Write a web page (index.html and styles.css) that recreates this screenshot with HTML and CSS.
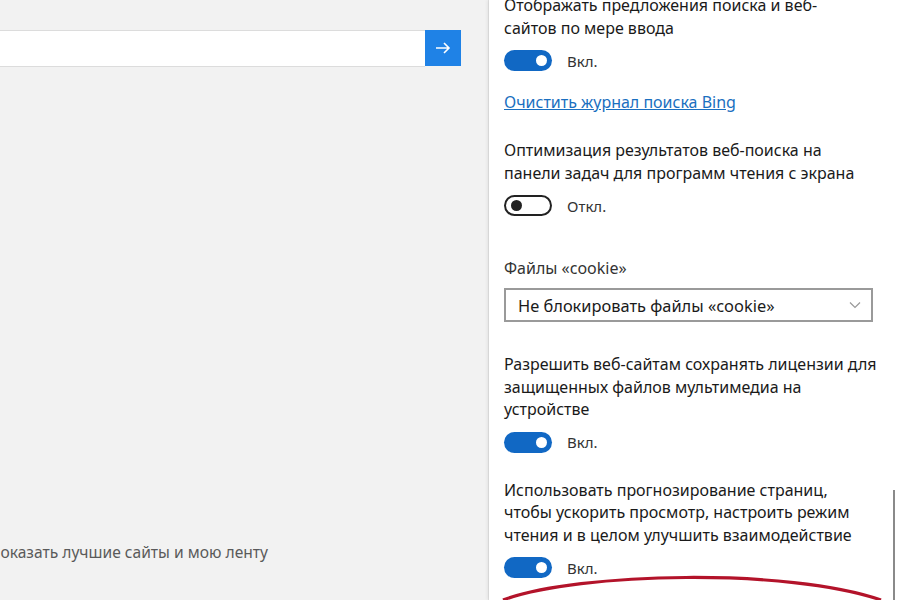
FILE: index.html
```html
<!DOCTYPE html>
<html lang="ru">
<head>
<meta charset="utf-8">
<link rel="stylesheet" href="styles.css">
</head>
<body>
<div class="page">
  <div class="left">
    <div class="search">
      <div class="search-input"></div>
      <div class="search-btn">
        <svg width="18" height="18" viewBox="0 0 18 18"><path d="M2 9h13M10 4l5 5-5 5" fill="none" stroke="#fff" stroke-width="1.6"/></svg>
      </div>
    </div>
    <div class="left-note">Показать лучшие сайты и мою ленту</div>
  </div>
  <div class="panel">
    <div class="content">
      <div class="group">
        <div class="text">Отображать предложения поиска и веб-<br>сайтов по мере ввода</div>
        <div class="toggle-row"><span class="toggle on"></span><span class="state">Вкл.</span></div>
        <a class="link">Очистить журнал поиска Bing</a>
      </div>
      <div class="group">
        <div class="text">Оптимизация результатов веб-поиска на<br>панели задач для программ чтения с экрана</div>
        <div class="toggle-row"><span class="toggle off"></span><span class="state">Откл.</span></div>
      </div>
      <div class="group cookies">
        <div class="label">Файлы «cookie»</div>
        <div class="select"><span>Не блокировать файлы «cookie»</span>
          <svg width="12" height="8" viewBox="0 0 12 8"><path d="M1 1.5l5 5 5-5" fill="none" stroke="#999" stroke-width="1.2"/></svg>
        </div>
      </div>
      <div class="group">
        <div class="text">Разрешить веб-сайтам сохранять лицензии для<br>защищенных файлов мультимедиа на<br>устройстве</div>
        <div class="toggle-row"><span class="toggle on"></span><span class="state">Вкл.</span></div>
      </div>
      <div class="group">
        <div class="text">Использовать прогнозирование страниц,<br>чтобы ускорить просмотр, настроить режим<br>чтения и в целом улучшить взаимодействие</div>
        <div class="toggle-row"><span class="toggle on"></span><span class="state">Вкл.</span></div>
      </div>
    </div>
    <div class="scrollbar"></div>
    <svg class="annotation" width="410" height="40" viewBox="0 0 410 40"><path d="M14 40 C 90 12, 300 8, 392 40" fill="none" stroke="#b3132a" stroke-width="3.2"/></svg>
  </div>
</div>
</body>
</html>
```
FILE: styles.css
```css
html, body { margin: 0; padding: 0; }
body {
  width: 900px; height: 600px; overflow: hidden;
  font-family: "Noto Sans", "Open Sans", sans-serif;
  background: #f2f2f2;
}
.page { display: flex; height: 600px; }
.left {
  width: 488px; flex: none;
  display: flex; flex-direction: column; justify-content: space-between;
  overflow: hidden;
  border-right: 1px solid #e2e2e2;
}
.search { display: flex; margin-top: 30px; width: 461px; }
.search-input {
  flex: 1; height: 35px; background: #fff;
  border-top: 1px solid #dcdcdc; border-bottom: 1px solid #dcdcdc;
}
.search-btn {
  width: 36px; height: 36px; background: #1f82e6;
  display: flex; align-items: center; justify-content: center;
}
.left-note {
  margin: 0 0 38px -11px;
  font-size: 15.6px; color: #5a5a5a; line-height: 20px;
}
.panel {
  position: relative; flex: 1; background: #fff; overflow: hidden;
  box-shadow: -2px 0 3px rgba(0,0,0,0.06);
}
.content { margin-top: -6px; padding-left: 15px; }
.group { margin-bottom: 26px; }
.text { font-size: 16px; line-height: 22.5px; color: #1a1a1a; }
.toggle-row { display: flex; align-items: center; margin-top: 11px; height: 21px; }
.toggle {
  width: 48px; height: 21px; border-radius: 11px; box-sizing: border-box;
  position: relative; flex: none;
}
.toggle.on { background: #1168c4; }
.toggle.on::after {
  content: ""; position: absolute; right: 5px; top: 5px;
  width: 11px; height: 11px; border-radius: 50%; background: #fff;
}
.toggle.off { border: 2px solid #222; background: #fff; }
.toggle.off::after {
  content: ""; position: absolute; left: 5px; top: 3px;
  width: 11px; height: 11px; border-radius: 50%; background: #222;
}
.state { margin-left: 15px; font-size: 15px; color: #333; }
.link {
  display: block; margin-top: 20px; font-size: 16px; line-height: 22px;
  color: #1a6fc0; text-decoration: underline;
}
.cookies { margin-top: 41px; margin-bottom: 31px; }
.label { font-size: 16px; line-height: 22px; color: #333; }
.select {
  margin-top: 9px; width: 369px; height: 34px; box-sizing: border-box;
  border: 2px solid #9a9a9a;
  display: flex; align-items: center; justify-content: space-between;
  padding: 0 10px 0 12px;
  font-size: 16.4px; color: #1a1a1a;
}
.scrollbar {
  position: absolute; right: 5px; top: 490px; width: 2px; height: 110px;
  background: #8a8a8a;
}
.annotation { position: absolute; left: 0; bottom: 0; }
```
